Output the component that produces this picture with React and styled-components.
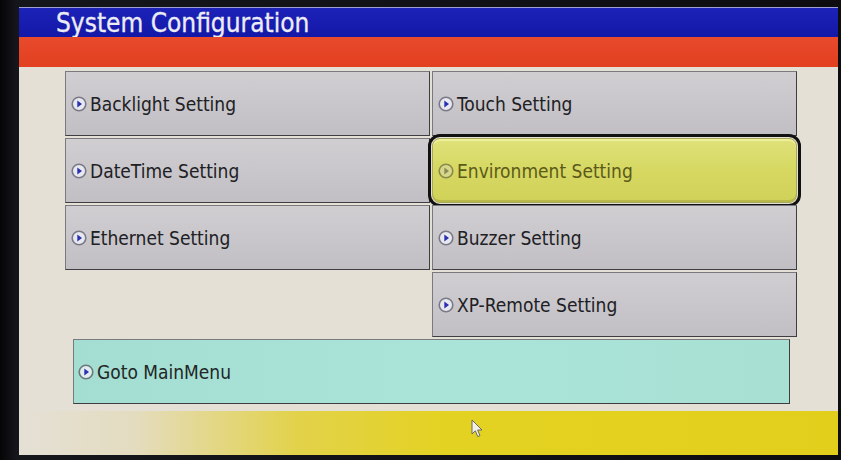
import styled, { createGlobalStyle } from "styled-components";

const GlobalStyle = createGlobalStyle`
  html, body {
    margin: 0;
    padding: 0;
    background: #0d0d0f;
  }
  * {
    box-sizing: border-box;
  }
`;

const Bezel = styled.div`
  width: 841px;
  height: 460px;
  padding: 7px 3px 5px 19px;
  background: linear-gradient(90deg, #050507 0%, #15161c 2%, #0d0d10 100%);
  overflow: hidden;
`;

const Screen = styled.div`
  display: flex;
  flex-direction: column;
  height: 100%;
  background: #e4e0d5;
  font-family: "DejaVu Sans Condensed", "DejaVu Sans", Tahoma, sans-serif;
`;

const TitleBar = styled.div`
  height: 30px;
  display: flex;
  align-items: center;
  padding-left: 37px;
  background: linear-gradient(180deg, #1c22b8 0%, #1418a8 100%);
  border-top: 1px solid #9ea0d0;
  color: #ececf4;
  font-size: 26px;
  -webkit-text-stroke: 0.3px #ececf4;
`;

const RedBand = styled.div`
  height: 30px;
  background: linear-gradient(180deg, #e84a2c 0%, #e2401f 100%);
`;

const Content = styled.div`
  display: flex;
  flex-direction: column;
  padding: 4px 0 0 46px;
`;

const Grid = styled.div`
  display: grid;
  grid-template-columns: 365px 365px;
  grid-auto-rows: 65px;
  gap: 2px;
`;

const themes = {
  grey: {
    bg: "linear-gradient(180deg, #d0ced1 0%, #c8c6ca 55%, #c1bfc4 100%)",
    text: "#202024",
    ring: "#7a7a86",
    dot: "#2a30b0",
    face: "#e8e8f0",
  },
  active: {
    bg: "linear-gradient(180deg, #dfe17a 0%, #d6d862 50%, #cfd158 100%)",
    text: "#5c5a1a",
    ring: "#8a8a4a",
    dot: "#8c8a5a",
    face: "#d8d88a",
  },
  teal: {
    bg: "linear-gradient(90deg, #a4ddd2 0%, #aae4d9 50%, #a8e0d3 100%)",
    text: "#222626",
    ring: "#6a7a7a",
    dot: "#2a30b0",
    face: "#e0ecee",
  },
};

const Button = styled.button`
  display: flex;
  align-items: center;
  gap: 3px;
  width: 100%;
  height: 100%;
  padding: 0 0 0 5px;
  margin: 0;
  border: 1px solid #7a7a7e;
  border-right-color: #3e3e42;
  border-bottom-color: #3e3e42;
  background: ${(p) => themes[p.$tone].bg};
  color: ${(p) => themes[p.$tone].text};
  font-family: inherit;
  font-size: 19px;
  text-align: left;
  cursor: default;
  grid-column: ${(p) => p.$col || "auto"};

  ${(p) =>
    p.$tone === "active" &&
    `
    border: 1px solid #a8a85a;
    border-radius: 8px;
    outline: 3px solid #111;
    outline-offset: 1px;
    box-shadow: inset 0 2px 0 #eef09a, inset 0 -2px 0 #b8ba4a;
  `}
`;

const WideButton = styled(Button)`
  width: 717px;
  height: 65px;
  margin: 2px 0 0 8px;
  padding-left: 4px;
`;

const Icon = ({ tone }) => {
  const t = themes[tone];
  return (
    <svg width="16" height="16" viewBox="0 0 16 16">
      <circle cx="8" cy="8" r="6.8" fill={t.face} stroke={t.ring} strokeWidth="1.6" />
      <path d="M6.3 4.6 L11 8 L6.3 11.4 Z" fill={t.dot} />
    </svg>
  );
};

const Footer = styled.div`
  position: relative;
  flex: 1;
  margin-top: 7px;
  background: linear-gradient(
    90deg,
    #e4e0d5 0%,
    #e4dcc0 14%,
    #e2d24a 34%,
    #e4d222 52%,
    #e2cf1c 100%
  );
`;

const Pointer = styled.svg`
  position: absolute;
  left: 452px;
  top: 8px;
`;

const items = [
  { label: "Backlight Setting", tone: "grey" },
  { label: "Touch Setting", tone: "grey" },
  { label: "DateTime Setting", tone: "grey" },
  { label: "Environment Setting", tone: "active" },
  { label: "Ethernet Setting", tone: "grey" },
  { label: "Buzzer Setting", tone: "grey" },
  { label: "XP-Remote Setting", tone: "grey", col: "2" },
];

export default function App() {
  return (
    <>
      <GlobalStyle />
      <Bezel>
        <Screen>
          <TitleBar>System Configuration</TitleBar>
          <RedBand />
          <Content>
            <Grid>
              {items.map((item) => (
                <Button key={item.label} $tone={item.tone} $col={item.col}>
                  <Icon tone={item.tone} />
                  {item.label}
                </Button>
              ))}
            </Grid>
            <WideButton $tone="teal">
              <Icon tone="teal" />
              Goto MainMenu
            </WideButton>
          </Content>
          <Footer>
            <Pointer width="12" height="19" viewBox="0 0 12 19">
              <path
                d="M1 1 L1 15 L4.3 11.8 L6.8 17.6 L9 16.6 L6.6 11 L11 11 Z"
                fill="#f2f0e8"
                stroke="#6a6a60"
                strokeWidth="1"
                strokeLinejoin="round"
              />
            </Pointer>
          </Footer>
        </Screen>
      </Bezel>
    </>
  );
}
